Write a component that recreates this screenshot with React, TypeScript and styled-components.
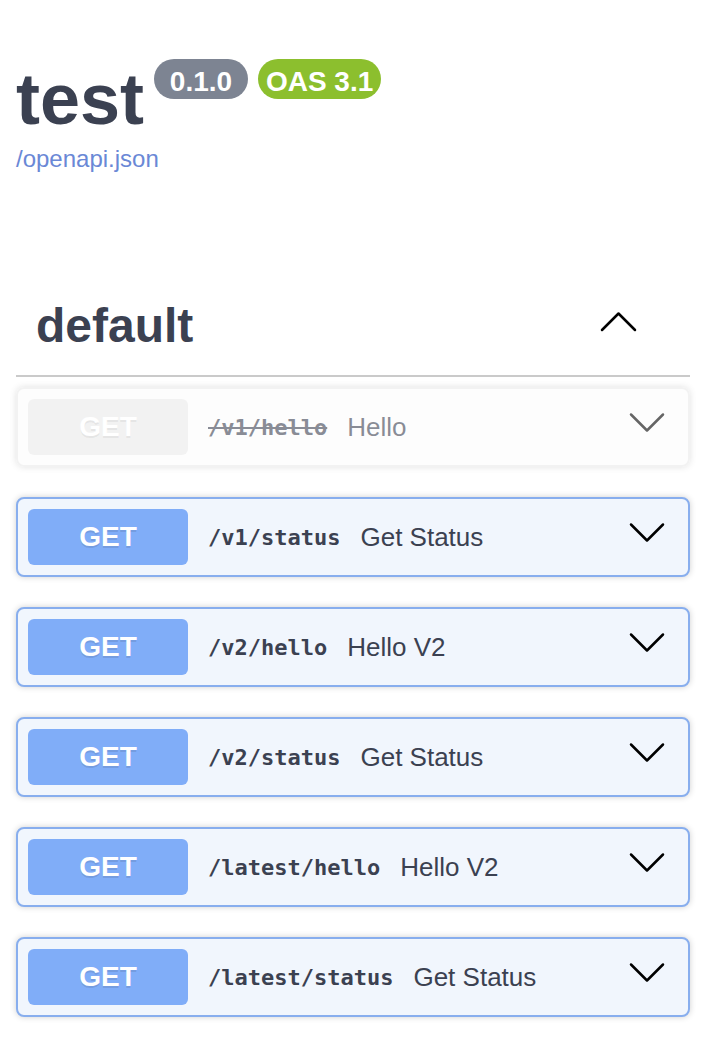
import React from 'react'
import styled, { createGlobalStyle } from 'styled-components';

const GlobalStyle = createGlobalStyle`
    body {
        margin: 0;
        background: #fff;
        font-family: "Liberation Sans", Arial, sans-serif;
        color: #3b4151;
    }
`;

const Page = styled.div`
    padding: 0 14px 0 16px;
`;

const TitleRow = styled.div`
    display: flex;
    align-items: flex-start;
    margin-top: 59px;
`;

const Title = styled.h2`
    margin: 4px 0 0 0;
    font-size: 72px;
    line-height: 72px;
    font-weight: bold;
    color: #3b4151;
`;

const Badge = styled.small<{ $color: string }>`
    display: inline-block;
    margin-left: 10px;
    padding: 7px 8px 1px;
    border-radius: 57px;
    background: ${p => p.$color};
    color: #fff;
    font-size: 28px;
    line-height: 32px;
    font-weight: bold;
    white-space: pre;
`;

const SpecLink = styled.a`
    display: block;
    margin-top: 10px;
    font-size: 24px;
    line-height: 28px;
    color: #6a88d6;
    text-decoration: none;
`;

const TagHeader = styled.div`
    display: flex;
    align-items: center;
    margin-top: 104px;
    padding: 20px 40px 20px 20px;
    border-bottom: 2px solid #cacaca;
`;

const TagName = styled.h3`
    flex: 1;
    margin: 0;
    font-size: 48px;
    line-height: 58px;
    font-weight: bold;
    color: #3b4151;
`;

const Arrow = styled.svg`
    flex: none;
    width: 40px;
    height: 40px;
    margin-right: 12px;
`;

const OpList = styled.div`
    padding-top: 10px;
`;

const OpBlock = styled.div<{ $deprecated?: boolean }>`
    display: flex;
    align-items: center;
    margin-bottom: 30px;
    padding: 10px;
    border: 2px solid ${p => p.$deprecated ? '#ebebeb' : '#88aeee'};
    border-radius: 8px;
    background: ${p => p.$deprecated ? 'rgba(235,235,235,.1)' : '#f1f6fd'};
    box-shadow: 0 0 6px rgba(0, 0, 0, .19);
    opacity: ${p => p.$deprecated ? 0.6 : 1};
`;

const Method = styled.span<{ $deprecated?: boolean }>`
    flex: none;
    width: 160px;
    padding: 12px 0;
    border-radius: 6px;
    background: ${p => p.$deprecated ? '#ebebeb' : '#80adf8'};
    color: #fff;
    font-size: 28px;
    line-height: 32px;
    font-weight: bold;
    text-align: center;
    text-shadow: 0 2px 0 rgba(0, 0, 0, .1);
`;

const Path = styled.span<{ $deprecated?: boolean }>`
    padding: 0 20px;
    font-family: "DejaVu Sans Mono", monospace;
    font-size: 22px;
    font-weight: bold;
    color: #3b4151;
    text-decoration: ${p => p.$deprecated ? 'line-through' : 'none'};
`;

const Summary = styled.span`
    flex: 1;
    font-size: 26px;
    color: #3b4151;
`;

type Operation = {
    path: string;
    summary: string;
    deprecated?: boolean;
}

const operations: Operation[] = [
    { path: '/v1/hello', summary: 'Hello', deprecated: true },
    { path: '/v1/status', summary: 'Get Status' },
    { path: '/v2/hello', summary: 'Hello V2' },
    { path: '/v2/status', summary: 'Get Status' },
    { path: '/latest/hello', summary: 'Hello V2' },
    { path: '/latest/status', summary: 'Get Status' },
];

const Chevron = ({ up }: { up?: boolean }) => (
    <Arrow viewBox="0 0 40 40">
        <polyline
            points={up ? '4,24 20.5,7.5 37,24' : '5,7.5 21,23.5 37,7.5'}
            fill="none"
            stroke="#000"
            strokeWidth="2.5"
            strokeLinecap="round"
            strokeLinejoin="round"
        />
    </Arrow>
)

const App = () => {
    return (
        <Page>
            <GlobalStyle />
            <TitleRow>
                <Title>test</Title>
                <Badge $color="#7d8492">{' 0.1.0 '}</Badge>
                <Badge $color="#8cbf2e">OAS 3.1</Badge>
            </TitleRow>
            <SpecLink href="#">/openapi.json</SpecLink>

            <TagHeader>
                <TagName>default</TagName>
                <Chevron up />
            </TagHeader>
            <OpList>
                {operations.map(op => (
                    <OpBlock key={op.path} $deprecated={op.deprecated}>
                        <Method $deprecated={op.deprecated}>GET</Method>
                        <Path $deprecated={op.deprecated}>{op.path}</Path>
                        <Summary>{op.summary}</Summary>
                        <Chevron />
                    </OpBlock>
                ))}
            </OpList>
        </Page>
    )
}

export default App;
